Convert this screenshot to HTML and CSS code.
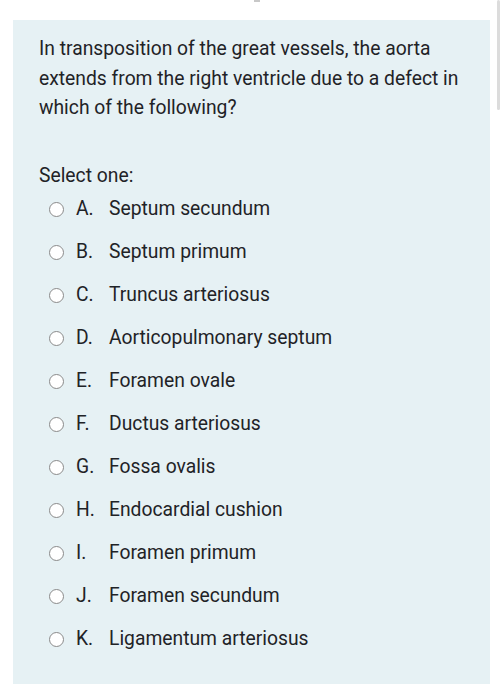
FILE: index.html
```html
<!DOCTYPE html>
<html>
<head>
<meta charset="utf-8">
<link rel="stylesheet" href="styles.css">
</head>
<body>
<div class="topmark"></div>
<div class="scrollbar"></div>
<div class="panel">
  <p class="question">In transposition of the great vessels, the aorta extends from the right ventricle due to a defect in which of the following?</p>
  <div class="prompt">Select one:</div>
  <div class="options">
    <div class="opt"><span class="radio"></span><span class="letter">A.</span><span class="label">Septum secundum</span></div>
    <div class="opt"><span class="radio"></span><span class="letter">B.</span><span class="label">Septum primum</span></div>
    <div class="opt"><span class="radio"></span><span class="letter">C.</span><span class="label">Truncus arteriosus</span></div>
    <div class="opt"><span class="radio"></span><span class="letter">D.</span><span class="label">Aorticopulmonary septum</span></div>
    <div class="opt"><span class="radio"></span><span class="letter">E.</span><span class="label">Foramen ovale</span></div>
    <div class="opt"><span class="radio"></span><span class="letter">F.</span><span class="label">Ductus arteriosus</span></div>
    <div class="opt"><span class="radio"></span><span class="letter">G.</span><span class="label">Fossa ovalis</span></div>
    <div class="opt"><span class="radio"></span><span class="letter">H.</span><span class="label">Endocardial cushion</span></div>
    <div class="opt"><span class="radio"></span><span class="letter">I.</span><span class="label">Foramen primum</span></div>
    <div class="opt"><span class="radio"></span><span class="letter">J.</span><span class="label">Foramen secundum</span></div>
    <div class="opt"><span class="radio"></span><span class="letter">K.</span><span class="label">Ligamentum arteriosus</span></div>
  </div>
</div>
</body>
</html>
```
FILE: styles.css
```css
html, body {
  margin: 0;
  padding: 0;
  background: #ffffff;
}
body {
  font-family: Roboto, "Liberation Sans", sans-serif;
  color: #1f2327;
  padding: 20px 14px 0 13px;
  width: 504px;
  box-sizing: border-box;
}
.topmark {
  position: absolute;
  left: 254px;
  top: 0;
  width: 6px;
  height: 2px;
  background: #c8c8c8;
}
.scrollbar {
  position: absolute;
  left: 497px;
  top: 0;
  width: 3px;
  height: 110px;
  background: #dcdcdc;
  border-radius: 2px;
}
.panel {
  background: #e6f1f4;
  width: 477px;
  height: 664px;
  box-sizing: border-box;
  padding: 14px 16px 0 26px;
}
.question {
  margin: 0;
  font-size: 19.3px;
  line-height: 29.5px;
}
.prompt {
  font-size: 19.3px;
  line-height: 22px;
  margin-top: 42px;
}
.options {
  display: flex;
  flex-direction: column;
  margin-top: 0;
}
.opt {
  display: flex;
  align-items: center;
  height: 43px;
  font-size: 19.3px;
}
.radio {
  width: 15px;
  height: 15px;
  box-sizing: border-box;
  border: 1.5px solid #8a8a8a;
  border-radius: 50%;
  background: #ffffff;
  margin-left: 10px;
  margin-right: 12px;
  margin-top: 3px;
  flex: none;
}
.letter {
  width: 33px;
  flex: none;
}
```
